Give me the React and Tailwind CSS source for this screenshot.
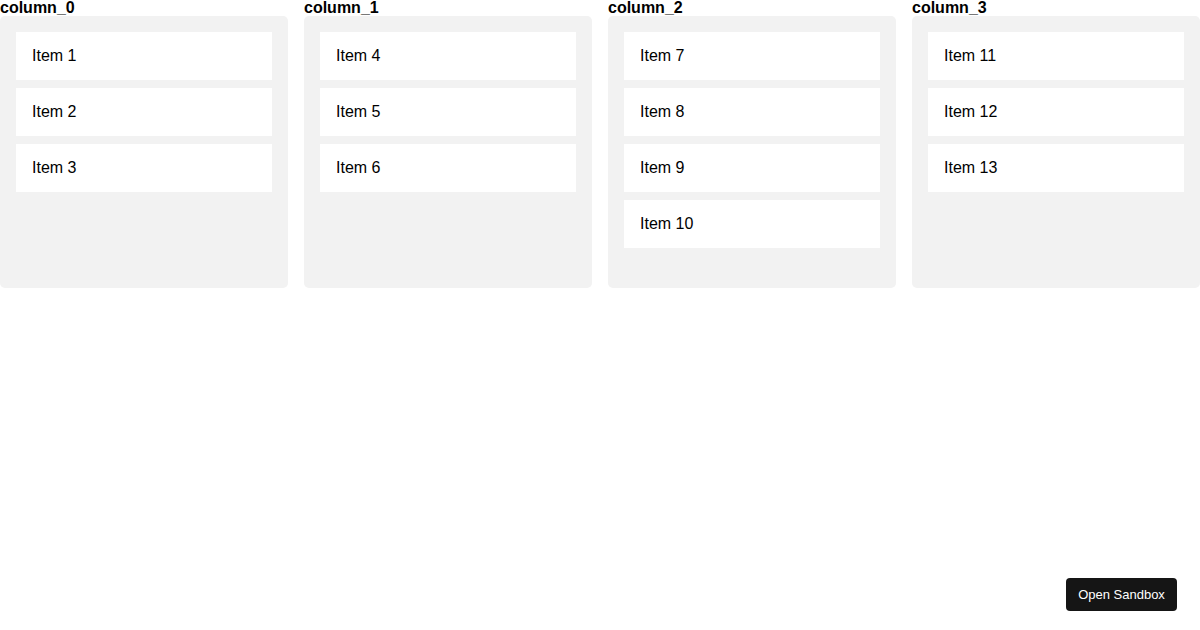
const columns = [
  { name: "column_0", items: ["Item 1", "Item 2", "Item 3"] },
  { name: "column_1", items: ["Item 4", "Item 5", "Item 6"] },
  { name: "column_2", items: ["Item 7", "Item 8", "Item 9", "Item 10"] },
  { name: "column_3", items: ["Item 11", "Item 12", "Item 13"] },
];

export default function App() {
  return (
    <div className="relative w-[1200px] h-[630px] bg-white font-['Liberation_Sans',Arial,sans-serif] text-black">
      <div className="flex gap-4">
        {columns.map((col) => (
          <div key={col.name} className="w-[288px]">
            <div className="text-base font-bold leading-4">{col.name}</div>
            <div className="h-[272px] bg-[#f2f2f2] rounded-[5px] p-4 flex flex-col gap-2">
              {col.items.map((item) => (
                <div key={item} className="h-12 bg-white px-4 flex items-center text-base">
                  {item}
                </div>
              ))}
            </div>
          </div>
        ))}
      </div>
      <button className="absolute left-[1066px] top-[578px] w-[111px] h-[33px] rounded bg-[#151515] text-white text-[13px] font-['Liberation_Sans',Arial,sans-serif]">
        Open Sandbox
      </button>
    </div>
  );
}
